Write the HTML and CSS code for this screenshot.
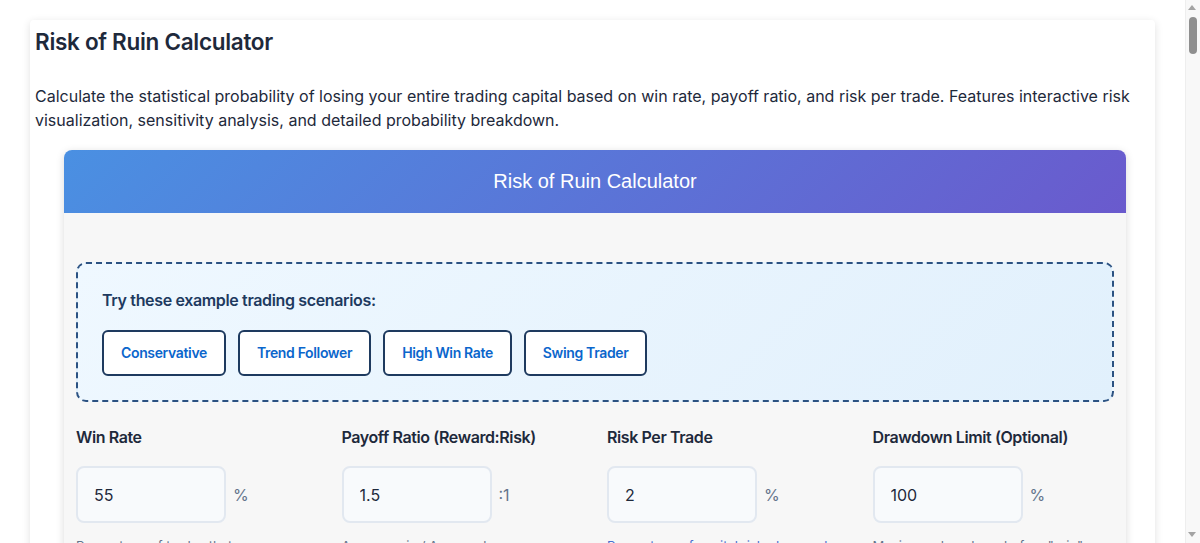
FILE: index.html
```html
<!DOCTYPE html>
<html lang="en">
<head>
    <meta charset="UTF-8">
    <meta name="viewport" content="width=device-width, initial-scale=1.0">
    <title>Risk of Ruin Calculator</title>
    <link rel="stylesheet" href="styles.css">
</head>
<body>

    <div class="page-card">
        <h2 class="page-title">Risk of Ruin Calculator</h2>
        <p class="page-intro">Calculate the statistical probability of losing your entire trading capital based on win rate, payoff ratio, and risk per trade. Features interactive risk visualization, sensitivity analysis, and detailed probability breakdown.</p>

        <div class="calculator">
            <div class="calc-header">Risk of Ruin Calculator</div>

            <div class="calc-body">
                <div class="scenarios">
                    <p class="scenarios-title">Try these example trading scenarios:</p>
                    <div class="scenario-list">
                        <button class="scenario-btn">Conservative</button>
                        <button class="scenario-btn">Trend Follower</button>
                        <button class="scenario-btn">High Win Rate</button>
                        <button class="scenario-btn">Swing Trader</button>
                    </div>
                </div>

                <div class="inputs">
                    <div class="field">
                        <label class="field-label">Win Rate</label>
                        <div class="field-row">
                            <input class="field-input" type="text" value="55">
                            <span class="unit">%</span>
                        </div>
                        <p class="hint">Percentage of trades that are profitable (0-100%)</p>
                    </div>
                    <div class="field">
                        <label class="field-label">Payoff Ratio (Reward:Risk)</label>
                        <div class="field-row">
                            <input class="field-input" type="text" value="1.5">
                            <span class="unit">:1</span>
                        </div>
                        <p class="hint">Average win / Average loss</p>
                    </div>
                    <div class="field">
                        <label class="field-label">Risk Per Trade</label>
                        <div class="field-row">
                            <input class="field-input" type="text" value="2">
                            <span class="unit">%</span>
                        </div>
                        <p class="hint hint-blue">Percentage of capital risked on each trade</p>
                    </div>
                    <div class="field">
                        <label class="field-label">Drawdown Limit (Optional)</label>
                        <div class="field-row">
                            <input class="field-input" type="text" value="100">
                            <span class="unit">%</span>
                        </div>
                        <p class="hint">Maximum drawdown before "ruin" (100% = total loss)</p>
                    </div>
                </div>

                <button class="calc-btn">Calculate Risk of Ruin</button>
            </div>
        </div>
    </div>

    <!-- window scrollbar, drawn since the headless shot hides the real one -->
    <div class="scrollbar">
        <span class="scroll-arrow up"></span>
        <span class="scroll-thumb"></span>
        <span class="scroll-arrow down"></span>
    </div>

</body>
</html>
```

FILE: styles.css
```css
body {
    margin: 0;
    padding-right: 15px;
    background-color: #ffffff;
    font-family: Inter, "Noto Sans", sans-serif;
    color: #1e293b;
}

.page-card {
    margin: 20px 30px;
    padding: 5px 5px 40px;
    background-color: #fff;
    border-radius: 4px;
    box-shadow: 0 2px 8px rgba(0, 0, 0, 0.12);
}

.page-title {
    font-size: 22.5px;
    font-weight: 600;
    letter-spacing: -0.3px;
    line-height: 26px;
    margin: 4px 0 0;
}

.page-intro {
    font-size: 16px;
    line-height: 24px;
    margin: 29px 0 18px;
}

.calculator {
    margin: 0 24px 0 29px;
    border-radius: 8px;
    overflow: hidden;
    box-shadow: 0 2px 8px rgba(0, 0, 0, 0.15);
}

.calc-header {
    background: linear-gradient(135deg, #4a90e2, #6a5acd);
    color: #fff;
    font-family: "Liberation Sans", Arial, sans-serif;
    font-size: 20px;
    line-height: 23px;
    text-align: center;
    padding: 20px;
}

.calc-body {
    background-color: #f7f7f7;
    padding: 49px 12px 40px;
}

.scenarios {
    background: linear-gradient(135deg, #eff8ff, #e1f0fc);
    border: 2px dashed #2c5282;
    border-radius: 10px;
    padding: 24px;
}

.scenarios-title {
    margin: 0;
    font-size: 16px;
    font-weight: 600;
    letter-spacing: -0.35px;
    line-height: 24px;
    color: #1e3a5f;
}

.scenario-list {
    display: flex;
    gap: 12px;
    margin-top: 18px;
}

.scenario-btn {
    background-color: #fff;
    border: 2px solid #1e3a5f;
    border-radius: 6px;
    color: #0b66cc;
    font-family: Inter, sans-serif;
    font-size: 14px;
    font-weight: 600;
    letter-spacing: -0.35px;
    line-height: 18px;
    padding: 12px 17px;
    cursor: pointer;
}

.inputs {
    display: grid;
    grid-template-columns: repeat(4, 1fr);
    gap: 24px;
    margin-top: 23px;
}

.field-label {
    display: block;
    font-size: 16px;
    font-weight: 600;
    letter-spacing: -0.4px;
    line-height: 24px;
    margin-bottom: 17px;
}

.field-row {
    display: flex;
    align-items: center;
    gap: 7px;
}

.field-input {
    width: 150px;
    height: 57px;
    box-sizing: border-box;
    padding: 0 16px;
    border: 2px solid #e2e8f0;
    border-radius: 8px;
    background-color: #f8fafc;
    font-family: Inter, sans-serif;
    font-size: 16px;
    color: #1e293b;
}

.unit {
    font-size: 16px;
    color: #64748b;
}

.hint {
    font-size: 13px;
    color: #64748b;
    margin: 14px 0 0;
    line-height: 18px;
}

.hint-blue {
    color: #4a6fd0;
}

.calc-btn {
    margin-top: 30px;
    width: 100%;
    padding: 14px;
    border: none;
    border-radius: 8px;
    background: linear-gradient(135deg, #4a90e2, #6a5acd);
    color: #fff;
    font-size: 16px;
    font-weight: 600;
}

.scrollbar {
    position: fixed;
    top: 0;
    right: 0;
    bottom: 0;
    width: 15px;
    background-color: #f8f8f8;
    border-left: 1px solid #eeeeee;
    box-sizing: border-box;
}

.scroll-thumb {
    position: absolute;
    top: 17px;
    left: 3px;
    width: 8px;
    height: 37px;
    border-radius: 4px;
    background-color: #8f8f8f;
}

.scroll-arrow {
    position: absolute;
    left: 2px;
    width: 0;
    height: 0;
    border-left: 4.5px solid transparent;
    border-right: 4.5px solid transparent;
}

.scroll-arrow.up {
    top: 5px;
    border-bottom: 5px solid #a3a3a3;
}

.scroll-arrow.down {
    bottom: 6px;
    border-top: 5px solid #a3a3a3;
}
```
